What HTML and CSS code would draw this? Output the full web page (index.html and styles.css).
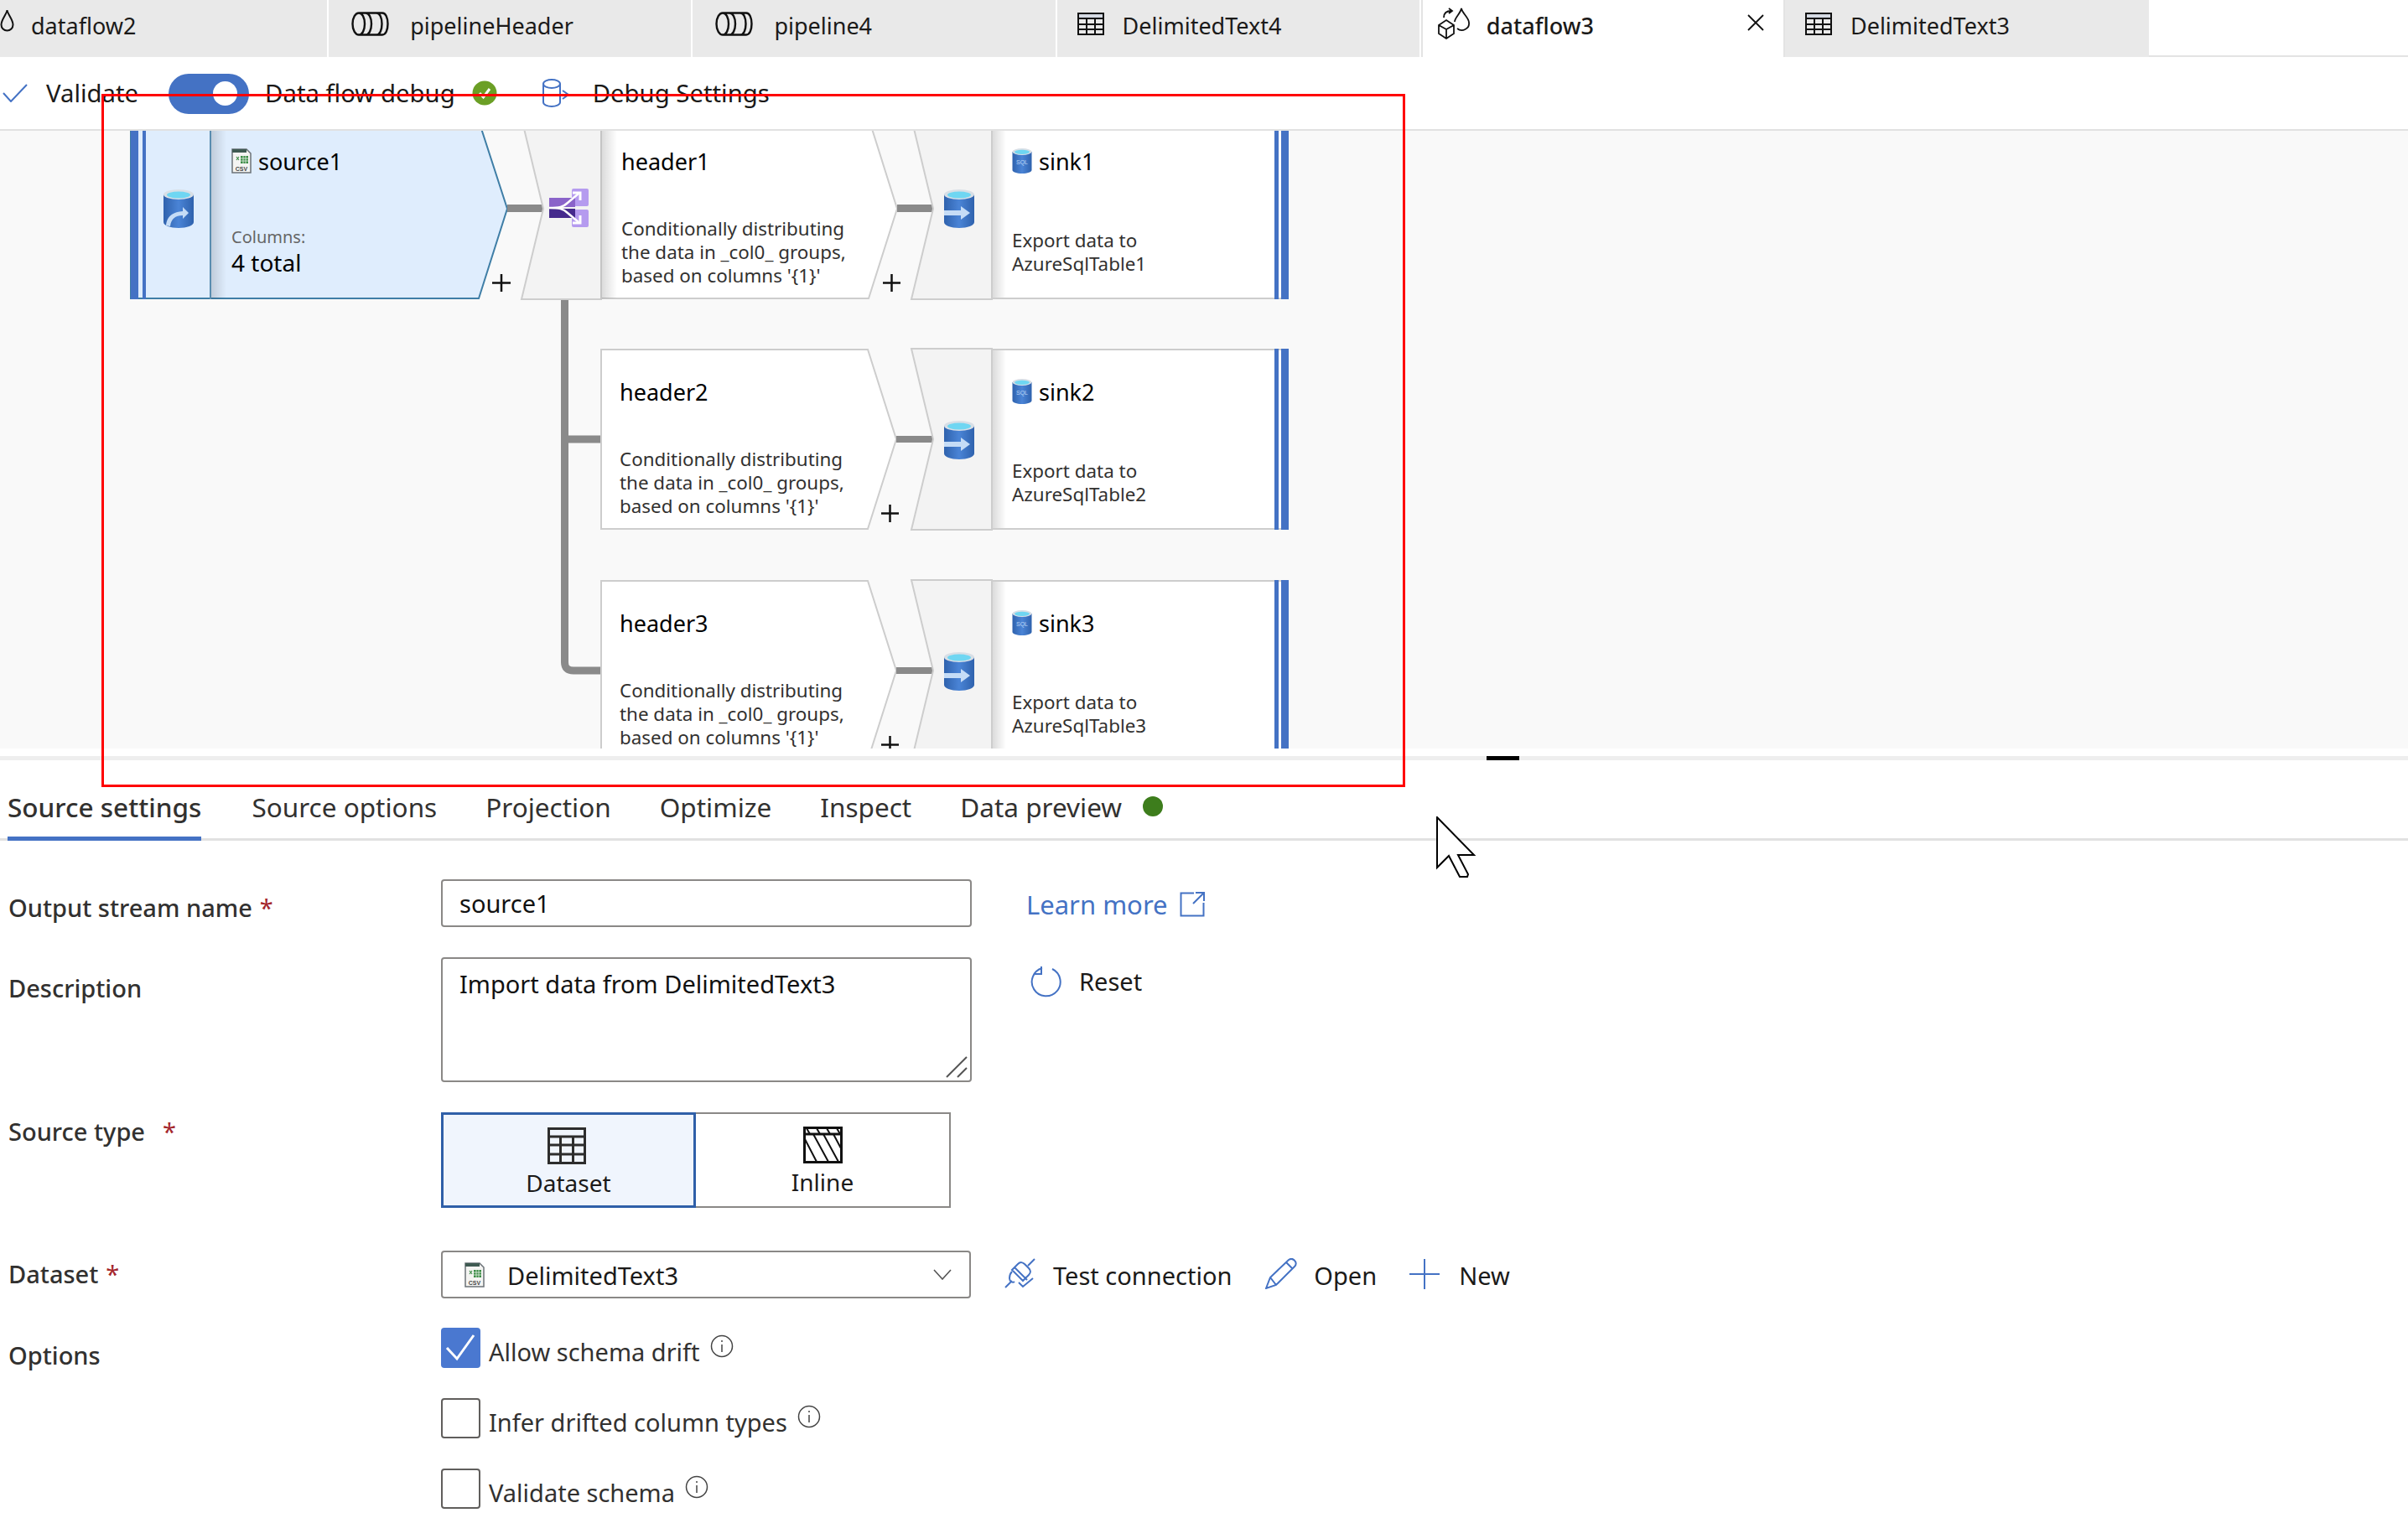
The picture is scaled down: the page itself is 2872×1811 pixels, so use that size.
FILE: index.html
```html
<!DOCTYPE html>
<html lang="en">
<head>
    <meta charset="UTF-8">
    <title>dataflow3</title>
    <link rel="stylesheet" href="styles.css">
</head>
<body>
<svg class="defs">
    <defs>
        <linearGradient id="dbBlue" x1="0" x2="1" y1="0" y2="0"><stop offset="0" stop-color="#2f62ad"/><stop offset="0.5" stop-color="#4a84d6"/><stop offset="1" stop-color="#2f62ad"/></linearGradient>
        <linearGradient id="purple" x1="0" x2="0" y1="0" y2="1"><stop offset="0" stop-color="#8a63c9"/><stop offset="1" stop-color="#3c2380"/></linearGradient>
        <linearGradient id="edge" x1="0" x2="1" y1="0" y2="0"><stop offset="0" stop-color="#000" stop-opacity="0.14"/><stop offset="1" stop-color="#000" stop-opacity="0"/></linearGradient>
        <symbol id="db" viewBox="0 0 36 46">
            <path d="M0 6V39C0 43 8 46 18 46S36 43 36 39V6Z" fill="url(#dbBlue)"/>
            <ellipse cx="18" cy="6" rx="18" ry="6" fill="#d8dfe6"/>
            <ellipse cx="18" cy="6.5" rx="14" ry="4" fill="#6fd6f2"/>
        </symbol>
        <symbol id="db-source" viewBox="0 0 36 46">
            <use href="#db" width="36" height="46"/>
            <path d="M3 43C4 32 11 27 23 26V21L30 28L23 35V31C14 31 9 35 8 44Z" fill="#c5dcf6"/>
        </symbol>
        <symbol id="db-sink" viewBox="0 0 36 46">
            <use href="#db" width="36" height="46"/>
            <path d="M0 25H20V20L31 28L20 36V31H0Z" fill="#c5dcf6"/>
        </symbol>
        <symbol id="db-sql" viewBox="0 0 23 30">
            <path d="M0 4V26C0 28 5 30 11.500 30S23 28 23 26V4Z" fill="url(#dbBlue)"/>
            <ellipse cx="11.500" cy="4" rx="11.500" ry="4" fill="#d8dfe6"/>
            <ellipse cx="11.500" cy="4.300" rx="9" ry="2.600" fill="#6fd6f2"/>
            <text x="11.500" y="19" text-anchor="middle" class="tiny-sql">SQL</text>
        </symbol>
        <symbol id="split" viewBox="0 0 47 46">
            <rect x="27" y="0" width="20" height="21" rx="2" fill="#b59bef"/>
            <rect x="27" y="25" width="20" height="21" rx="2" fill="#b59bef"/>
            <rect x="0" y="11" width="31" height="11" fill="#8a63c9"/>
            <rect x="0" y="24" width="31" height="11" fill="#452a8c"/>
            <path d="M0 23C12 23 17 22 22 17L35 6M0 23C12 23 17 24 22 29L35 40" fill="none" stroke="#fff" stroke-width="2.500"/>
            <path d="M28 5H37V14M28 41H37V32" fill="none" stroke="#fff" stroke-width="3"/>
        </symbol>
        <symbol id="csv" viewBox="0 0 24 30">
            <path d="M1 1H18L23 6V29H1Z" fill="#f4f4f2" stroke="#6b7177" stroke-width="1.500"/>
            <path d="M1 1H18V5H1Z" fill="#3f5a52"/>
            <path d="M11 9H20V18H11Z" fill="#3c8c46"/>
            <path d="M14 9V18M17 9V18M11 12H20M11 15H20" stroke="#e9f3e9" stroke-width="0.800"/>
            <path d="M6 10L9 14M9 10L6 14" stroke="#3c8c46" stroke-width="1.200"/>
            <text x="12" y="26.500" text-anchor="middle" class="tiny-csv">CSV</text>
        </symbol>
        <symbol id="pipeline" viewBox="0 0 45 29">
            <path d="M9 1.500H37C41 1.500 43.500 7 43.500 14.500S41 27.500 37 27.500H9C5 27.500 1.500 22 1.500 14.500S5 1.500 9 1.500ZM9 1.500C13 1.500 16 7 16 14.500S13 27.500 9 27.500M17 1.500C21 1.500 24 7 24 14.500S21 27.500 17 27.500M30 1.500C34 1.500 36.500 7 36.500 14.500S34 27.500 30 27.500" fill="none" stroke="#111" stroke-width="2.400"/>
        </symbol>
        <symbol id="grid" viewBox="0 0 32 27">
            <path d="M1 1H31V26H1ZM1 7H31M1 14H31M1 20H31M11 7V26M21 7V26" fill="none" stroke="#111" stroke-width="2"/>
            <path d="M2 2H30V6H2Z" fill="#d5dae3"/>
        </symbol>
    </defs>
</svg>

<div class="page">
    <nav class="doc-tabs">
        <div class="doc-tab first">
            <svg class="tab-icon" width="17" height="27" viewBox="0 0 17 27"><path d="M8.500 1C8 6 1.500 12 1.500 18.500A7 7 0 0 0 15.500 18.500C15.500 12 9 6 8.500 1Z" fill="none" stroke="#111" stroke-width="2"/></svg>
            <span>dataflow2</span>
        </div>
        <div class="doc-tab pipe">
            <svg class="tab-icon" width="45" height="29"><use href="#pipeline"/></svg>
            <span>pipelineHeader</span>
        </div>
        <div class="doc-tab pipe">
            <svg class="tab-icon" width="45" height="29"><use href="#pipeline"/></svg>
            <span>pipeline4</span>
        </div>
        <div class="doc-tab">
            <svg class="tab-icon" width="32" height="27"><use href="#grid"/></svg>
            <span>DelimitedText4</span>
        </div>
        <div class="doc-tab active">
            <svg class="tab-icon" width="40" height="38" viewBox="0 0 40 38"><path d="M2 21L11 15L20 21V31L11 37L2 31ZM2 21L11 26L20 21M11 26V37M8 12C8 6 12 4 17 4M14 1L18 4L14 7M21 17C21 12 28 7 29 1C30 7 38 12 38 18A8.500 8 0 0 1 24 25" fill="none" stroke="#111" stroke-width="1.800"/></svg>
            <span>dataflow3</span>
            <svg class="tab-close" width="20" height="20" viewBox="0 0 20 20"><path d="M1 1L19 19M19 1L1 19" stroke="#111" stroke-width="1.800"/></svg>
        </div>
        <div class="doc-tab last">
            <svg class="tab-icon" width="32" height="27"><use href="#grid"/></svg>
            <span>DelimitedText3</span>
        </div>
    </nav>

    <div class="toolbar">
        <div class="tool validate">
            <svg width="30" height="22" viewBox="0 0 30 22"><path d="M1 11L10 21L29 1" fill="none" stroke="#4472c4" stroke-width="2"/></svg>
            <span>Validate</span>
        </div>
        <div class="toggle"><div class="knob"></div></div>
        <div class="tool debug">
            <span>Data flow debug</span>
            <svg width="30" height="30" viewBox="0 0 30 30"><circle cx="15" cy="15" r="14.500" fill="#6b9f25"/><path d="M9 15L13.500 20L21 10" fill="none" stroke="#fff" stroke-width="3"/></svg>
        </div>
        <div class="tool settings">
            <svg width="34" height="34" viewBox="0 0 34 34"><path d="M2 6V28C2 31 7 33 12 33S22 31 22 28V6M2 6C2 3 7 1 12 1S22 3 22 6S17 11 12 11S2 9 2 6ZM25 14L32 19L25 24M22 19H31" fill="none" stroke="#4472c4" stroke-width="2"/></svg>
            <span>Debug Settings</span>
        </div>
    </div>

    <div class="canvas">
        <svg class="wires" width="2872" height="737" viewBox="0 156 2872 737">
            <defs>
                <g id="sink-node">
                    <path d="M1087 0H1183V216H1087L1113 108Z" fill="#f3f3f3" stroke="#cdcdcd" stroke-width="2"/>
                    <rect x="1183" y="0" width="354" height="216" fill="#fff"/>
                    <rect x="1184" y="0" width="16" height="216" fill="url(#edge)"/>
                    <path d="M1183 0V216M1183 215H1537M1183 1H1537" stroke="#cdcdcd" stroke-width="2"/>
                    <rect x="1520" y="0" width="5" height="216" fill="#4472c4"/>
                    <rect x="1528" y="0" width="9" height="216" fill="#4472c4"/>
                </g>
                <g id="branch-node">
                    <path d="M717 1H1035L1069 108L1035 215H717Z" fill="#fff" stroke="#cdcdcd" stroke-width="2"/>
                    <rect x="1069" y="104" width="44" height="8" fill="#8a8a8a"/>
                    <path d="M1051 196.500H1072M1061.500 186V207" stroke="#111" stroke-width="2.500"/>
                    <use href="#sink-node"/>
                    <use href="#db-sink" x="1126" y="86" width="36" height="46"/>
                </g>
            </defs>

            <path d="M673.500 357V790Q673.500 800 684 800H717M673.500 524H717" fill="none" stroke="#8a8a8a" stroke-width="9"/>

            <path d="M156 141H570L605 249L571 356H156Z" fill="#dfedfd" stroke="#3f7ea6" stroke-width="2"/>
            <rect x="156" y="141" width="9" height="216" fill="#4472c4"/>
            <rect x="170" y="141" width="4" height="216" fill="#4472c4"/>
            <path d="M251 141V357" stroke="#5a8db0" stroke-width="2"/>
            <rect x="252" y="141" width="18" height="215" fill="url(#edge)"/>
            <use href="#db-source" x="195" y="226" width="36" height="46"/>
            <rect x="605" y="244" width="43" height="9" fill="#8a8a8a"/>
            <path d="M587 337.500H609M598 327V348" stroke="#111" stroke-width="2.500"/>

            <path d="M622 141H717V357H622L648 249Z" fill="#f3f3f3" stroke="#cdcdcd" stroke-width="2"/>
            <path d="M717 141H1036L1070 249L1036 356H717Z" fill="#fff" stroke="#cdcdcd" stroke-width="2"/>
            <rect x="718" y="141" width="18" height="215" fill="url(#edge)"/>
            <path d="M717 141V357" stroke="#c4c4c4" stroke-width="2"/>
            <use href="#split" x="655" y="225" width="47" height="46"/>
            <rect x="1070" y="244" width="43" height="9" fill="#8a8a8a"/>
            <path d="M1053 337.500H1074M1063.500 327V348" stroke="#111" stroke-width="2.500"/>
            <use href="#sink-node" y="141"/>
            <use href="#db-sink" x="1126" y="226" width="36" height="46"/>

            <use href="#branch-node" y="416"/>
            <use href="#branch-node" y="692"/>
        </svg>

        <div class="row row-1">
            <div class="node-text source-text">
                <div class="node-title"><svg class="title-icon"><use href="#csv"/></svg>source1</div>
                <div class="columns-label">Columns:</div>
                <div class="columns-value">4 total</div>
            </div>
            <div class="node-text header-text shift">
                <div class="node-title">header1</div>
                <div class="node-desc">Conditionally distributing<br>the data in _col0_ groups,<br>based on columns '{1}'</div>
            </div>
            <div class="node-text sink-text">
                <div class="node-title"><svg class="title-icon"><use href="#db-sql"/></svg>sink1</div>
                <div class="node-desc">Export data to<br>AzureSqlTable1</div>
            </div>
        </div>
        <div class="row row-2">
            <div class="node-text header-text">
                <div class="node-title">header2</div>
                <div class="node-desc">Conditionally distributing<br>the data in _col0_ groups,<br>based on columns '{1}'</div>
            </div>
            <div class="node-text sink-text">
                <div class="node-title"><svg class="title-icon"><use href="#db-sql"/></svg>sink2</div>
                <div class="node-desc">Export data to<br>AzureSqlTable2</div>
            </div>
        </div>
        <div class="row row-3">
            <div class="node-text header-text">
                <div class="node-title">header3</div>
                <div class="node-desc">Conditionally distributing<br>the data in _col0_ groups,<br>based on columns '{1}'</div>
            </div>
            <div class="node-text sink-text">
                <div class="node-title"><svg class="title-icon"><use href="#db-sql"/></svg>sink3</div>
                <div class="node-desc">Export data to<br>AzureSqlTable3</div>
            </div>
        </div>
    </div>

    <div class="splitter"><div class="splitter-grip"></div></div>

    <nav class="panel-tabs">
        <div class="panel-tab active">Source settings</div>
        <div class="panel-tab">Source options</div>
        <div class="panel-tab">Projection</div>
        <div class="panel-tab">Optimize</div>
        <div class="panel-tab">Inspect</div>
        <div class="panel-tab">Data preview<span class="status-dot"></span></div>
    </nav>

    <section class="form">
        <div class="form-row row-stream">
            <label class="form-label">Output stream name<span class="req">*</span></label>
            <div class="field-line">
                <div class="text-box">source1</div>
                <a class="learn-more">Learn more
                    <svg width="30" height="30" viewBox="0 0 30 30"><path d="M17 1.500H1.500V28.500H28.500V13M19 1H29V11M29 1L16 14" fill="none" stroke="#4472c4" stroke-width="2"/></svg>
                </a>
            </div>
        </div>
        <div class="form-row row-desc">
            <label class="form-label">Description</label>
            <div class="field-line">
                <div class="text-box area">Import data from DelimitedText3
                    <svg class="resize-grip" width="26" height="26" viewBox="0 0 26 26"><path d="M1 25L25 1M14 25L25 14" stroke="#555" stroke-width="2"/></svg>
                </div>
                <div class="reset">
                    <svg width="38" height="38" viewBox="0 0 38 38"><path d="M14 3A17 17 0 1 0 26 4M13 1V10H4" fill="none" stroke="#4472c4" stroke-width="2"/></svg>
                    <span>Reset</span>
                </div>
            </div>
        </div>
        <div class="form-row row-type">
            <label class="form-label">Source type<span class="req wide">*</span></label>
            <div class="type-group">
                <div class="type-btn selected">
                    <svg class="type-icon" width="46" height="44" viewBox="0 0 46 44"><path d="M1.500 1.500H44.500V42.500H1.500ZM1.500 11H44.500M1.500 21H44.500M1.500 32H44.500M15.500 11V42M30.500 11V42" fill="none" stroke="#2d2d2d" stroke-width="3"/></svg>
                    <span>Dataset</span>
                </div>
                <div class="type-btn">
                    <svg width="47" height="44" viewBox="0 0 47 44"><path d="M1.500 1.500H45.500V42.500H1.500ZM1.500 9H45.500" fill="none" stroke="#111" stroke-width="3"/><path d="M2 15L16 42M12 9L30 42M24 9L42 42M36 9L45 26M4 2L8 9M16 2L20 9M28 2L32 9M40 2L44 9" fill="none" stroke="#111" stroke-width="2"/></svg>
                    <span>Inline</span>
                </div>
            </div>
        </div>
        <div class="form-row row-dataset">
            <label class="form-label">Dataset<span class="req">*</span></label>
            <div class="field-line">
                <div class="dropdown">
                    <svg width="24" height="32"><use href="#csv"/></svg>
                    <span class="dropdown-value">DelimitedText3</span>
                    <svg class="chevron" width="22" height="13" viewBox="0 0 22 13"><path d="M1 1L11 12L21 1" fill="none" stroke="#555" stroke-width="1.600"/></svg>
                </div>
                <div class="actions">
                    <div class="action test">
                        <svg width="38" height="37" viewBox="0 0 38 37"><path d="M1 35L9 27M36 1L28 9M12 11L27 26M9 14L16 7C19 4 22 5 24 7L29 12C31 14 32 17 29 20L22 27L9 14ZM12 28C10 30 6 28 6 24C6 21 7 18 9 16M17 29L22 34L34 24" fill="none" stroke="#4472c4" stroke-width="2"/></svg>
                        <span>Test connection</span>
                    </div>
                    <div class="action open">
                        <svg width="38" height="37" viewBox="0 0 38 37"><path d="M1 36L6 23L28 2C31 0 34 1 36 4C37 6 37 8 35 10L13 32ZM6 23L13 32M25 5L33 13" fill="none" stroke="#4472c4" stroke-width="2"/></svg>
                        <span>Open</span>
                    </div>
                    <div class="action new">
                        <svg width="36" height="36" viewBox="0 0 36 36"><path d="M0 18H36M18 0V36" stroke="#4472c4" stroke-width="2"/></svg>
                        <span>New</span>
                    </div>
                </div>
            </div>
        </div>
        <div class="form-row row-options">
            <label class="form-label">Options</label>
            <div class="option-list">
                <div class="option">
                    <div class="checkbox checked">
                        <svg width="47" height="48" viewBox="0 0 47 48"><path d="M7 24L19 37L39 9" fill="none" stroke="#fff" stroke-width="3"/></svg>
                    </div>
                    <span>Allow schema drift</span>
                    <svg class="info" width="28" height="28" viewBox="0 0 28 28"><circle cx="14" cy="14" r="12.500" fill="none" stroke="#444" stroke-width="1.500"/><path d="M14 12V21M14 7V9" stroke="#444" stroke-width="1.500"/></svg>
                </div>
                <div class="option">
                    <div class="checkbox"></div>
                    <span>Infer drifted column types</span>
                    <svg class="info" width="28" height="28" viewBox="0 0 28 28"><circle cx="14" cy="14" r="12.500" fill="none" stroke="#444" stroke-width="1.500"/><path d="M14 12V21M14 7V9" stroke="#444" stroke-width="1.500"/></svg>
                </div>
                <div class="option">
                    <div class="checkbox"></div>
                    <span>Validate schema</span>
                    <svg class="info" width="28" height="28" viewBox="0 0 28 28"><circle cx="14" cy="14" r="12.500" fill="none" stroke="#444" stroke-width="1.500"/><path d="M14 12V21M14 7V9" stroke="#444" stroke-width="1.500"/></svg>
                </div>
            </div>
        </div>
    </section>

    <div class="red-box"></div>
    <svg class="cursor" width="48" height="76" viewBox="0 0 48 76"><path d="M1 1V61L15 47L28 72H37L38 69L26 46H45Z" fill="#fff" stroke="#000" stroke-width="2"/></svg>
</div>
</body>
</html>
```

FILE: styles.css
```css
* { box-sizing: border-box; margin: 0; padding: 0; }
body { background: #fff; font-family: "Noto Sans", "Open Sans", sans-serif; color: #1b1a19; overflow: hidden; }
.defs { position: absolute; width: 0; height: 0; }
.tiny-sql { font-family: "Liberation Sans", sans-serif; font-size: 7px; fill: #bcd6f5; }
.tiny-csv { font-family: "Liberation Sans", sans-serif; font-size: 7px; font-weight: bold; fill: #444; }
.page { position: relative; width: 2872px; height: 1811px; overflow: hidden; }

/* document tabs */
.doc-tabs { display: flex; height: 68px; margin-left: -42px; box-shadow: inset 0 -2px 0 #e3e3e3; }
.doc-tab { display: flex; align-items: center; gap: 22px; width: 434.2px; padding: 0 0 7px 24px; background: #e9e9e9; border-right: 2px solid #fff; font-size: 27px; }
.doc-tab.first { padding-left: 42px; gap: 20px; }
.doc-tab.first .tab-icon { margin-top: -12px; }
.doc-tab.pipe { padding-left: 27px; gap: 25px; }
.doc-tab.active { position: relative; background: #fff; padding-left: 17px; gap: 19px; border-left: 2px solid #e3e3e3; border-right: 2px solid #e3e3e3; font-weight: 500; }
.doc-tab.last { border-right: 0; }
.tab-icon { margin-top: -5px; flex: none; }
.tab-close { position: absolute; right: 23px; top: 17px; }

/* toolbar */
.toolbar { position: relative; display: flex; align-items: center; height: 88px; border-bottom: 2px solid #e1e1e1; font-size: 29.3px; }
.tool { display: flex; align-items: center; }
.validate { gap: 22px; padding-left: 3px; }
.debug { gap: 20px; margin-left: 19px; }
.settings { gap: 27px; margin-left: 53px; }
.toggle { width: 96px; height: 48px; margin-left: 36px; margin-top: 2px; padding: 9px 14px 0 0; background: #4472c4; border-radius: 24px; display: flex; justify-content: flex-end; }
.knob { width: 29px; height: 29px; border-radius: 50%; background: #fff; }

/* pipeline canvas */
.canvas { position: relative; height: 737px; background: #f9f9f9; overflow: hidden; }
.wires { position: absolute; left: 0; top: 0; }
.row { position: absolute; left: 0; height: 216px; width: 100%; }
.row-1 { top: -15px; }
.row-2 { top: 260px; }
.row-3 { top: 536px; }
.node-text { position: absolute; top: 31px; }
.source-text { left: 276px; }
.header-text { left: 739px; }
.header-text.shift { left: 741px; }
.sink-text { left: 1207px; }
.node-title { display: flex; align-items: center; gap: 8px; height: 40px; font-size: 27px; color: #000; }
.title-icon { width: 24px; height: 30px; flex: none; }
.node-desc { margin-top: 47px; font-size: 22.4px; line-height: 28px; color: #323130; white-space: nowrap; }
.sink-text .node-desc { margin-top: 61px; }
.columns-label { margin-top: 57px; font-size: 20px; line-height: 28px; color: #666; }
.columns-value { font-size: 28px; line-height: 32px; color: #000; }

/* splitter */
.splitter { position: relative; height: 5px; margin-top: 9px; background: #eee; }
.splitter-grip { position: absolute; left: 1773px; top: 0; width: 39px; height: 5px; background: #000; }

/* panel tabs */
.panel-tabs { display: flex; gap: 58px; height: 96px; padding-left: 9px; border-bottom: 3px solid #e1e1e1; font-size: 31.5px; color: #323130; }
.panel-tab { display: flex; align-items: center; height: 96px; padding-top: 14px; }
.panel-tab.active { font-weight: 500; border-bottom: 5px solid #4472c4; padding-top: 19px; margin-right: 2px; }
.status-dot { width: 24px; height: 24px; margin: 0 0 0 25px; border-radius: 50%; background: #3d7d1c; }

/* form */
.form { padding-top: 46px; font-size: 29px; }
.form-row { display: grid; grid-template-columns: 526px 1fr; }
.form-label { padding-left: 10px; line-height: 40px; font-weight: 500; color: #323130; }
.req { margin-left: 9px; color: #a4262c; font-weight: 400; }
.req.wide { margin-left: 21px; }
.row-stream { margin-bottom: 36px; }
.row-stream .form-label { padding-top: 14px; }
.row-desc { margin-bottom: 36px; }
.row-desc .form-label { padding-top: 17px; }
.row-type { margin-bottom: 51px; }
.row-type .form-label { padding-top: 3px; }
.row-dataset { margin-bottom: 35px; }
.row-dataset .form-label { padding-top: 8px; }
.row-options .form-label { padding-top: 13px; }
.field-line { display: flex; align-items: flex-start; }
.text-box { position: relative; width: 633px; height: 57px; padding: 0 20px; line-height: 54px; border: 2px solid #8a8886; border-radius: 4px; color: #111; }
.text-box.area { height: 149px; line-height: 60px; white-space: nowrap; }
.resize-grip { position: absolute; right: 3px; bottom: 3px; }
.learn-more { display: flex; align-items: center; gap: 14px; margin: 9px 0 0 65px; color: #4472c4; font-size: 31px; }
.reset { display: flex; align-items: center; gap: 20px; margin: 9px 0 0 70px; }
.type-group { display: flex; font-size: 28px; }
.type-btn { display: flex; flex-direction: column; align-items: center; width: 304px; height: 114px; padding-top: 15px; border: 2px solid #8a8886; border-left: 0; }
.type-btn span { margin-top: 2px; line-height: 40px; }
.type-btn.selected { background: #f0f5fd; border: 3px solid #2f5fa8; }
.type-icon { margin-right: 5px; }
.dropdown { display: flex; align-items: center; width: 632px; height: 57px; padding: 0 21px 0 26px; border: 2px solid #8a8886; border-radius: 4px; }
.dropdown-value { margin: 2px 0 0 27px; }
.chevron { margin-left: auto; }
.actions { display: flex; align-items: center; height: 57px; margin-left: 40px; padding-bottom: 2px; }
.action { display: flex; align-items: center; }
.action span { margin-top: 4px; }
.test { gap: 20px; }
.open { gap: 20px; margin-left: 40px; }
.new { gap: 23px; margin-left: 39px; }
.option-list { display: flex; flex-direction: column; gap: 36px; }
.option { display: flex; align-items: center; height: 48px; color: #323130; }
.option span { margin: 8px 0 0 10px; }
.checkbox { width: 47px; height: 48px; border: 2px solid #605e5c; border-radius: 4px; }
.checkbox.checked { background: #4a78d0; border: 0; }
.info { margin: -4px 0 0 12px; }

/* overlays */
.red-box { position: absolute; left: 121px; top: 112px; width: 1555px; height: 827px; border: 3px solid #f00; pointer-events: none; }
.cursor { position: absolute; left: 1713px; top: 974px; }
```
